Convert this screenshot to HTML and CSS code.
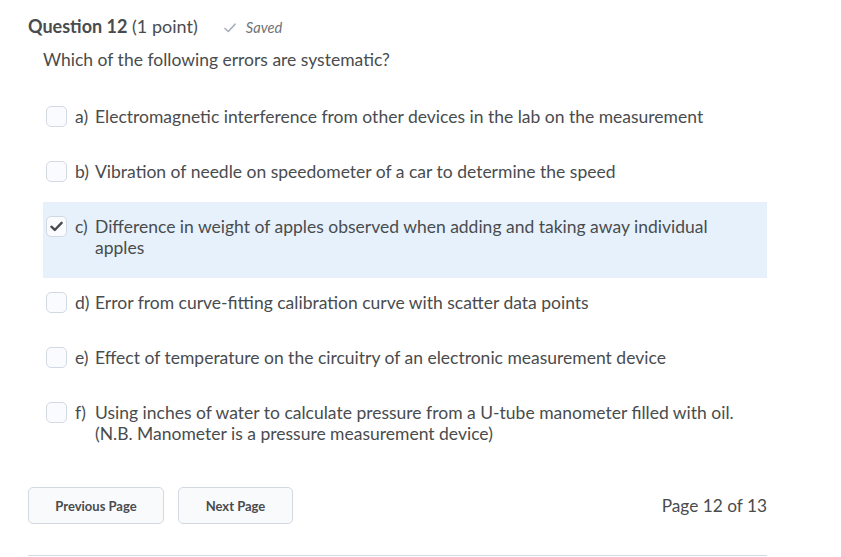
FILE: index.html
```html
<!DOCTYPE html>
<html>
<head>
<meta charset="utf-8">
<link rel="stylesheet" href="styles.css">
</head>
<body>
<div class="page">
  <div class="q-header">
    <span class="q-title"><b>Question 12</b> (1 point)</span>
    <span class="saved"><svg class="saved-check" width="12" height="10" viewBox="0 0 12 10"><path d="M1 5.5 L4.3 8.5 L11 1.2" fill="none" stroke="#a3adbb" stroke-width="1.6" stroke-linecap="round" stroke-linejoin="round"/></svg><i>Saved</i></span>
  </div>
  <div class="q-body">
    <p class="q-text">Which of the following errors are systematic?</p>
    <ul class="options">
      <li class="option">
        <span class="box"></span>
        <span class="lbl">a)</span>
        <span class="txt">Electromagnetic interference from other devices in the lab on the measurement</span>
      </li>
      <li class="option">
        <span class="box"></span>
        <span class="lbl">b)</span>
        <span class="txt">Vibration of needle on speedometer of a car to determine the speed</span>
      </li>
      <li class="option selected">
        <span class="box checked"><svg width="13" height="11" viewBox="0 0 12 10"><path d="M1.3 5.2 L4.4 8.2 L10.7 1.6" fill="none" stroke="#494c4e" stroke-width="2.2" stroke-linecap="round" stroke-linejoin="round"/></svg></span>
        <span class="lbl">c)</span>
        <span class="txt">Difference in weight of apples observed when adding and taking away individual apples</span>
      </li>
      <li class="option">
        <span class="box"></span>
        <span class="lbl">d)</span>
        <span class="txt">Error from curve-fitting calibration curve with scatter data points</span>
      </li>
      <li class="option">
        <span class="box"></span>
        <span class="lbl">e)</span>
        <span class="txt">Effect of temperature on the circuitry of an electronic measurement device</span>
      </li>
      <li class="option">
        <span class="box"></span>
        <span class="lbl">f)</span>
        <span class="txt">Using inches of water to calculate pressure from a U-tube manometer filled with oil. (N.B. Manometer is a pressure measurement device)</span>
      </li>
    </ul>
  </div>
  <div class="nav">
    <div class="buttons">
      <button class="btn btn-prev">Previous Page</button>
      <button class="btn btn-next">Next Page</button>
    </div>
    <span class="page-count">Page 12 of 13</span>
  </div>
  <div class="divider"></div>
</div>
</body>
</html>
```
FILE: styles.css
```css
html, body {
  margin: 0;
  padding: 0;
  background: #ffffff;
}
body {
  font-family: Lato, "Open Sans", sans-serif;
  color: #494c4e;
}
.page {
  width: 739px;
  margin-left: 28px;
  padding-top: 13px;
}
.q-header {
  height: 26px;
  line-height: 26px;
}
.q-title {
  font-size: 18px;
}
.q-title b {
  font-weight: 700;
}
.saved {
  margin-left: 22px;
  font-size: 14.6px;
  color: #6e7376;
}
.saved-check {
  margin-right: 10px;
  vertical-align: 0px;
}
.q-body {
  padding-left: 15px;
}
.q-text {
  margin: 10px 0 0 0;
  font-size: 17.5px;
  line-height: 22px;
}
.options {
  list-style: none;
  margin: 21px 0 0 0;
  padding: 0;
}
.option {
  display: flex;
  align-items: flex-start;
  padding: 14px 0 20px 3px;
  font-size: 17.5px;
  line-height: 21px;
}
.option.selected {
  background: #e6f1fc;
}
.box {
  flex: none;
  box-sizing: border-box;
  width: 21px;
  height: 21px;
  border: 1px solid #d3d9e3;
  border-radius: 5px;
  background: #f9fbff;
  display: flex;
  align-items: center;
  justify-content: center;
}
.lbl {
  flex: none;
  width: 20px;
  margin-left: 8px;
}
.txt {
  flex: 1;
  padding-right: 20px;
}
.nav {
  display: flex;
  justify-content: space-between;
  align-items: center;
  margin-top: 23px;
}
.buttons {
  display: flex;
  gap: 14px;
}
.btn {
  box-sizing: border-box;
  height: 37px;
  border: 1px solid #d3d9e3;
  border-radius: 5px;
  background: #f9fafb;
  font-family: Lato, "Open Sans", sans-serif;
  font-weight: 700;
  font-size: 13px;
  color: #494c4e;
  padding: 0;
}
.btn-prev {
  width: 136px;
}
.btn-next {
  width: 115px;
}
.page-count {
  font-size: 17.3px;
}
.divider {
  margin-top: 31px;
  height: 1px;
  background: #d3d9e3;
}
```
